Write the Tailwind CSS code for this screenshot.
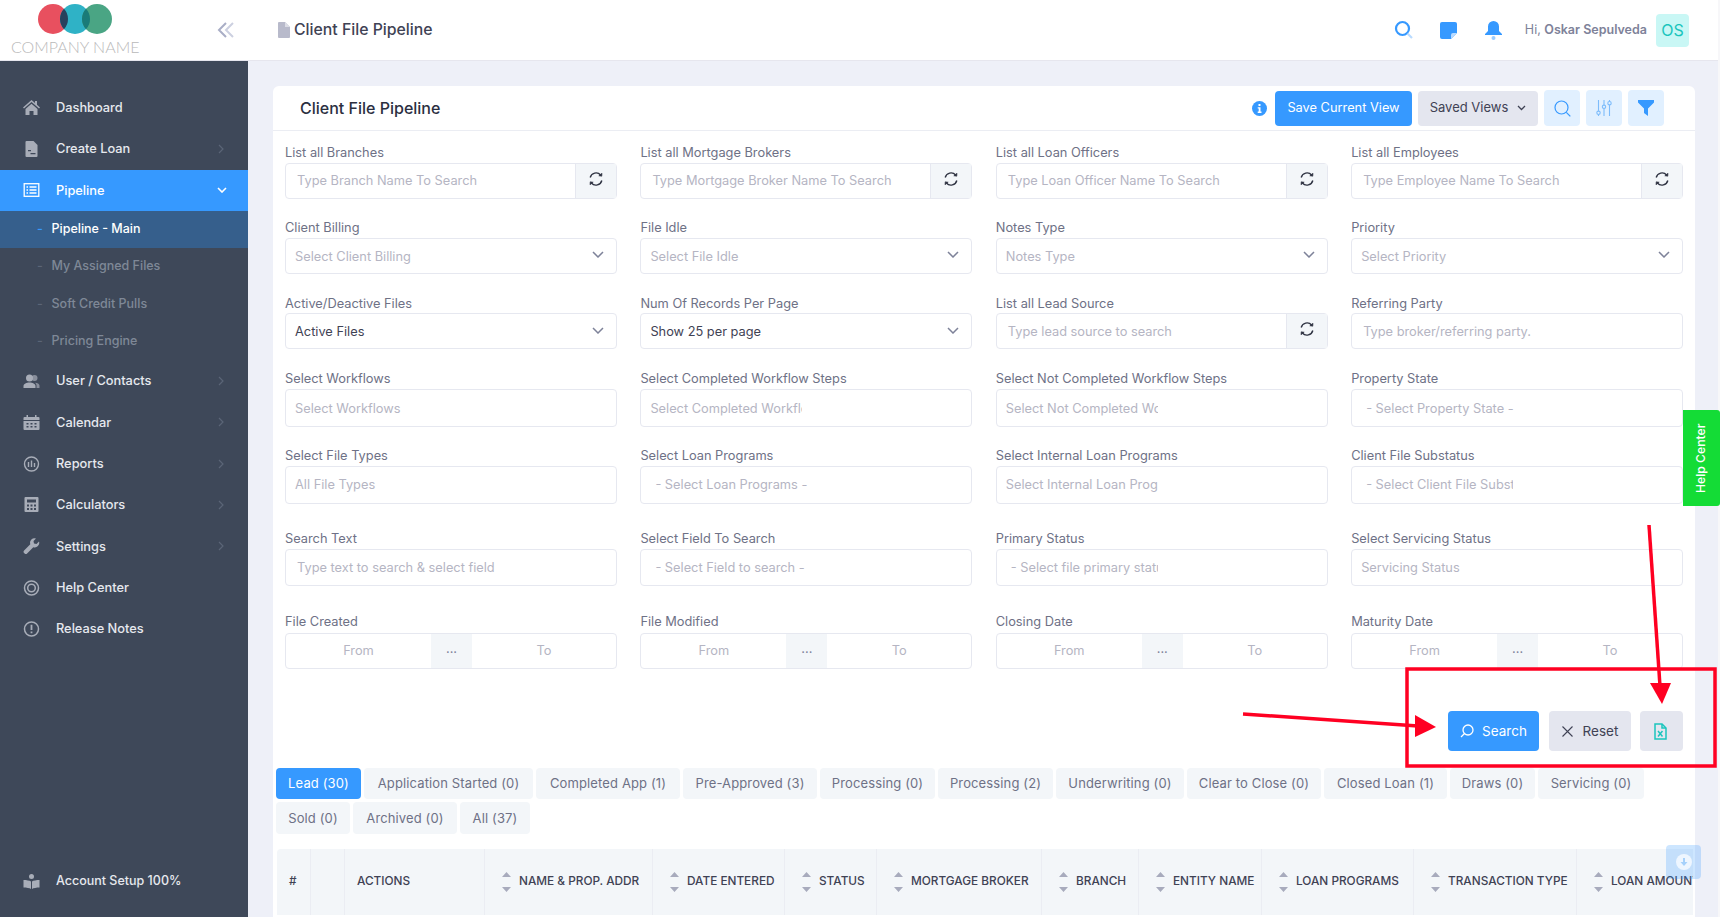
<!DOCTYPE html>
<html lang="en">
<head>
  <meta charset="UTF-8" />
  <title>Client File Pipeline</title>
  <script src="https://cdn.jsdelivr.net/npm/@tailwindcss/browser@4"></script>
</head>
<body class="relative w-[1720px] h-[917px] overflow-hidden bg-[#eef0f8] text-[#3f4254] [font-family:Inter,sans-serif] text-[13px]">

<!-- Header -->
<header class="flex items-center h-[61px] bg-white border-b border-[#e6e6ee]">
  <div class="relative w-[248px] h-full shrink-0 overflow-hidden">
    <svg class="absolute left-[36px] top-[3px]" width="78" height="32" viewBox="0 0 78 32">
      <circle cx="17" cy="16" r="15" fill="#e8505f"/>
      <circle cx="39" cy="16" r="15" fill="#2fb2c6"/>
      <circle cx="61" cy="16" r="15" fill="#4aa584"/>
      <path d="M28 5.800a15 15 0 0 1 0 20.400a15 15 0 0 1 0-20.400z" fill="#27405c"/>
      <path d="M50 5.800a15 15 0 0 1 0 20.400a15 15 0 0 1 0-20.400z" fill="#1a7b78"/>
    </svg>
    <div class="absolute left-[11px] top-[37px] text-[16px] leading-[20px] text-[#b9b9b9] [font-family:Lato,sans-serif] font-light whitespace-nowrap">COMPANY NAME</div>
    <svg class="absolute left-[217px] top-[22px]" width="18" height="16" viewBox="0 0 18 16" fill="none" stroke="#a9aec6" stroke-width="2"><path d="M9 1 2 8l7 7"/><path d="M16 1 9 8l7 7" stroke="#ccd0e0"/></svg>
  </div>
  <svg class="ml-[30px]" width="12" height="16" viewBox="0 0 12 16"><path d="M0 1a1 1 0 0 1 1-1h6l5 5v10a1 1 0 0 1-1 1H1a1 1 0 0 1-1-1z" fill="#b8bacb"/><path d="M7 0l5 5H7z" fill="#dcdde6"/></svg>
  <div class="ml-[4px] text-[15.800px] font-medium text-[#3f4254]">Client File Pipeline</div>
  <div class="ml-auto flex items-center pr-[31px]">
    <svg width="20" height="20" viewBox="0 0 20 20" fill="none"><circle cx="8.500" cy="8.500" r="6.500" stroke="#3699ff" stroke-width="2.200"/><path d="M13.500 13.500 18 18" stroke="#b9dbff" stroke-width="2.200"/></svg>
    <svg class="ml-[26px]" width="17" height="17" viewBox="0 0 17 17"><path d="M2 0h13a2 2 0 0 1 2 2v9l-6 6H2a2 2 0 0 1-2-2V2a2 2 0 0 1 2-2z" fill="#3699ff"/><path d="M11 17v-4a2 2 0 0 1 2-2h4z" fill="#b9dbff"/></svg>
    <svg class="ml-[28px]" width="17" height="19" viewBox="0 0 17 19"><path d="M8.500 0A5.500 5.500 0 0 0 3 5.500V10l-3 3v1h17v-1l-3-3V5.500A5.500 5.500 0 0 0 8.500 0z" fill="#3699ff"/><circle cx="8.500" cy="17" r="2" fill="#9ccdff"/></svg>
    <div class="ml-[23px] text-[#7e8299] text-[12.500px]">Hi, <span class="font-semibold">Oskar Sepulveda</span></div>
    <div class="ml-[9px] w-[33px] h-[33px] rounded-[4px] bg-[#c9f7f5] text-[#1bc5bd] text-[16px] flex items-center justify-center">OS</div>
  </div>
</header>

<div class="flex h-[856px]">
  <!-- Sidebar -->
  <aside class="relative w-[248px] shrink-0 bg-[#3e4859] pt-[26px] text-[12.800px] font-medium text-[#e6e8ee]">
    <a class="flex items-center h-[41.300px] pl-[23px]">
      <svg class="w-[17px] mr-[16px]" width="17" height="15" viewBox="0 0 17 15" fill="#a8adb8"><path d="M8.500 0 0 7.500l1 1L8.500 2l7.500 6.500 1-1-3-2.700V1h-2v2.100z"/><path d="M2.500 9 8.500 3.800 14.500 9v6h-4v-4h-4v4h-4z"/></svg>
      Dashboard
    </a>
    <a class="flex items-center h-[41.300px] pl-[23px]">
      <svg class="w-[17px] mr-[16px]" width="17" height="16" viewBox="0 0 12 16"><path d="M1 0h7l4 4v11a1 1 0 0 1-1 1H1a1 1 0 0 1-1-1V1a1 1 0 0 1 1-1z" fill="#a8adb8"/><path d="M2.500 9h3v1.200h-3zM5 12h5v1.200H5z" fill="#3e4859"/></svg>
      Create Loan
      <svg class="ml-auto mr-[24px]" width="6" height="10" viewBox="0 0 6 10" fill="none" stroke="#5b6577" stroke-width="1.200"><path d="m1 1 4 4-4 4"/></svg>
    </a>
    <a class="flex items-center h-[41.300px] pl-[23px] bg-[#3699ff] text-white">
      <svg class="w-[17px] mr-[16px]" width="16" height="14" viewBox="0 0 16 14" fill="none" stroke="#fff" stroke-width="1.300"><rect x=".7" y=".7" width="14.600" height="12.600"/><path d="M3 4h1.500M6 4h7M3 7h1.500M6 7h7M3 10h1.500M6 10h7"/></svg>
      Pipeline
      <svg class="ml-auto mr-[21px]" width="10" height="6" viewBox="0 0 10 6" fill="none" stroke="#fff" stroke-width="1.600"><path d="m1 1 4 4 4-4"/></svg>
    </a>
    <a class="flex items-center h-[37px] pl-[37px] bg-[#365f8c] text-white text-[12.500px]"><span class="w-[14.500px] text-[#3699ff]">-</span>Pipeline - Main</a>
    <a class="flex items-center h-[37.500px] pl-[37px] text-[#7f8897] text-[12.500px]"><span class="w-[14.500px] text-[#5b6577]">-</span>My Assigned Files</a>
    <a class="flex items-center h-[37.500px] pl-[37px] text-[#7f8897] text-[12.500px]"><span class="w-[14.500px] text-[#5b6577]">-</span>Soft Credit Pulls</a>
    <a class="flex items-center h-[37.500px] pl-[37px] text-[#7f8897] text-[12.500px]"><span class="w-[14.500px] text-[#5b6577]">-</span>Pricing Engine</a>
    <a class="flex items-center h-[41.300px] pl-[23px]">
      <svg class="w-[17px] mr-[16px]" width="16" height="14" viewBox="0 0 16 14" fill="#a8adb8"><circle cx="6" cy="4" r="3.500"/><circle cx="11" cy="4" r="3" opacity=".7"/><path d="M0 14v-2c0-2 3-3.500 6-3.500s6 1.500 6 3.500v2z"/><path d="M13 14v-2.500c0-1-.6-2-1.700-2.700 2.600.1 4.700 1.200 4.700 2.700V14z" opacity=".7"/></svg>
      User / Contacts
      <svg class="ml-auto mr-[24px]" width="6" height="10" viewBox="0 0 6 10" fill="none" stroke="#5b6577" stroke-width="1.200"><path d="m1 1 4 4-4 4"/></svg>
    </a>
    <a class="flex items-center h-[41.300px] pl-[23px]">
      <svg class="w-[17px] mr-[16px]" width="16" height="15" viewBox="0 0 16 15" fill="#a8adb8"><path d="M3 0h1.500v2h7V0H13v2h2a1 1 0 0 1 1 1v2H0V3a1 1 0 0 1 1-1h2z"/><path d="M0 6h16v8a1 1 0 0 1-1 1H1a1 1 0 0 1-1-1z"/><path d="M3 8h2v1.500H3zM7 8h2v1.500H7zM11 8h2v1.500h-2zM3 11h2v1.500H3zM7 11h2v1.500H7zM11 11h2v1.500h-2z" fill="#3e4859"/></svg>
      Calendar
      <svg class="ml-auto mr-[24px]" width="6" height="10" viewBox="0 0 6 10" fill="none" stroke="#5b6577" stroke-width="1.200"><path d="m1 1 4 4-4 4"/></svg>
    </a>
    <a class="flex items-center h-[41.300px] pl-[23px]">
      <svg class="w-[17px] mr-[16px]" width="16" height="16" viewBox="0 0 16 16" fill="none" stroke="#a8adb8"><circle cx="8" cy="8" r="7" stroke-width="1.400"/><path d="M5 11V6M8 11V4.500M11 11V7" stroke-width="1.400"/></svg>
      Reports
      <svg class="ml-auto mr-[24px]" width="6" height="10" viewBox="0 0 6 10" fill="none" stroke="#5b6577" stroke-width="1.200"><path d="m1 1 4 4-4 4"/></svg>
    </a>
    <a class="flex items-center h-[41.300px] pl-[23px]">
      <svg class="w-[17px] mr-[16px]" width="14" height="15" viewBox="0 0 14 15" fill="#a8adb8"><path d="M1 0h12a1 1 0 0 1 1 1v13a1 1 0 0 1-1 1H1a1 1 0 0 1-1-1V1a1 1 0 0 1 1-1z"/><path d="M2.500 2.500h9v3h-9zM2.500 7.500h2v2h-2zM6 7.500h2v2H6zM9.500 7.500h2v2h-2zM2.500 11h2v2h-2zM6 11h2v2H6zM9.500 11h2v2h-2z" fill="#3e4859"/></svg>
      Calculators
      <svg class="ml-auto mr-[24px]" width="6" height="10" viewBox="0 0 6 10" fill="none" stroke="#5b6577" stroke-width="1.200"><path d="m1 1 4 4-4 4"/></svg>
    </a>
    <a class="flex items-center h-[41.300px] pl-[23px]">
      <svg class="w-[17px] mr-[16px]" width="16" height="16" viewBox="0 0 16 16" fill="#a8adb8"><path d="M15.500 3.500 13 6l-2.500-.5L10 3l2.500-2.500A4.500 4.500 0 0 0 6.800 6.200L.6 12.400a1.800 1.800 0 0 0 0 2.500l.5.500a1.800 1.800 0 0 0 2.500 0l6.200-6.200a4.500 4.500 0 0 0 5.700-5.700z"/></svg>
      Settings
      <svg class="ml-auto mr-[24px]" width="6" height="10" viewBox="0 0 6 10" fill="none" stroke="#5b6577" stroke-width="1.200"><path d="m1 1 4 4-4 4"/></svg>
    </a>
    <a class="flex items-center h-[41.300px] pl-[23px]">
      <svg class="w-[17px] mr-[16px]" width="16" height="16" viewBox="0 0 16 16" fill="none" stroke="#a8adb8" stroke-width="1.500"><circle cx="8" cy="8" r="7"/><circle cx="8" cy="8" r="3.800"/></svg>
      Help Center
    </a>
    <a class="flex items-center h-[41.300px] pl-[23px]">
      <svg class="w-[17px] mr-[16px]" width="16" height="16" viewBox="0 0 16 16" fill="none" stroke="#a8adb8" stroke-width="1.500"><circle cx="8" cy="8" r="7"/><path d="M8 3.800v5.200M8 10.500v1.700" stroke-width="1.800"/></svg>
      Release Notes
    </a>
    <a class="absolute left-0 right-0 top-[800px] flex items-center h-[41.300px] pl-[23px] text-[12.500px]">
      <svg class="w-[17px] mr-[16px]" width="16" height="15" viewBox="0 0 16 15" fill="#a8adb8"><circle cx="8" cy="2.500" r="2.500"/><path d="M0 6c3 0 6 .5 7.500 1.500V15C6 14 3 13.500 0 13.500zM16 6c-3 0-6 .5-7.500 1.500V15c1.500-1 4.500-1.500 7.500-1.500z"/></svg>
      Account Setup 100%
    </a>
  </aside>

  <!-- Main -->
  <main class="flex-1 pl-[25px] pr-[25px] pt-[25px] overflow-hidden">
    <div class="bg-white rounded-t-[6px] h-[900px]">
      <div class="flex items-center h-[45px] border-b border-[#ebedf3] pl-[27px] pr-[31px]">
        <h1 class="text-[16px] font-medium text-[#2b2f3f]">Client File Pipeline</h1>
        <div class="ml-auto flex items-center">
          <svg width="15" height="15" viewBox="0 0 15 15"><circle cx="7.500" cy="7.500" r="7.500" fill="#3699ff"/><path d="M6.500 3h2v2h-2zM5.700 6.200h2.800v4.300h1v1.400H5.700v-1.400h1V7.600h-1z" fill="#fff"/></svg>
          <button class="ml-[8px] w-[137px] h-[35px] rounded-[4px] bg-[#3699ff] text-white text-[12.800px]">Save Current View</button>
          <button class="ml-[6px] w-[120px] h-[35px] rounded-[4px] bg-[#e4e6ef] text-[#3f4254] text-[13px] flex items-center justify-center gap-[9px]">Saved Views
            <svg width="9" height="6" viewBox="0 0 9 6" fill="none" stroke="#3f4254" stroke-width="1.300"><path d="m1 1 3.500 3.500L8 1"/></svg>
          </button>
          <div class="ml-[6px] w-[36px] h-[36px] rounded-[4px] bg-[#e1f0ff] flex items-center justify-center">
            <svg width="17" height="17" viewBox="0 0 17 17" fill="none" stroke="#3699ff" stroke-width="1.200"><circle cx="7.500" cy="7.500" r="6.500"/><path d="m12.300 12.300 4 4"/></svg>
          </div>
          <div class="ml-[6px] w-[36px] h-[36px] rounded-[4px] bg-[#e1f0ff] flex items-center justify-center">
            <svg width="16" height="16" viewBox="0 0 16 16" fill="none" stroke="#7dbcfb" stroke-width="1.100"><path d="M2.500 0v11M2.500 14.500V16M8 0v5M8 8.500V16M13.500 0v1.500M13.500 5V16"/><circle cx="2.500" cy="12.800" r="1.700"/><circle cx="8" cy="6.800" r="1.700"/><circle cx="13.500" cy="3.200" r="1.700"/></svg>
          </div>
          <div class="ml-[6px] w-[36px] h-[36px] rounded-[4px] bg-[#e1f0ff] flex items-center justify-center">
            <svg width="16" height="16" viewBox="0 0 16 16" fill="#3699ff"><path d="M0 0h16v2.500L10 8.500V16l-4-3V8.500L0 2.500z"/></svg>
          </div>
        </div>
      </div>

      <div class="px-[12px] text-[#b5b5c3] text-[12.800px]">
        <!-- Row 1 -->
        <div class="grid grid-cols-4 gap-x-[23.500px] pt-[10px]">
          <div><label class="block h-[22px] leading-[23px] text-[#6e7186]">List all Branches</label>
            <div class="flex h-[36px] border border-[#e6e8f0] rounded-[4px]"><div class="flex-1 pl-[11px] flex items-center">Type Branch Name To Search</div><div class="w-[41px] bg-[#f3f6f9] border-l border-[#e6e8f0] flex items-center justify-center"><svg class="mb-[4px]" width="16" height="16" viewBox="0 0 16 16" fill="none" stroke="#2f3342" stroke-width="1.400"><path d="M2.200 6.500A6 6 0 0 1 12.600 4M13.800 9.500A6 6 0 0 1 3.400 12"/><path d="m10.800 4.800 3 .4.200-3zM5.200 11.200l-3-.4-.2 3z" fill="#2f3342" stroke-width=".6"/></svg></div></div></div>
          <div><label class="block h-[22px] leading-[23px] text-[#6e7186]">List all Mortgage Brokers</label>
            <div class="flex h-[36px] border border-[#e6e8f0] rounded-[4px]"><div class="flex-1 pl-[11px] flex items-center">Type Mortgage Broker Name To Search</div><div class="w-[41px] bg-[#f3f6f9] border-l border-[#e6e8f0] flex items-center justify-center"><svg class="mb-[4px]" width="16" height="16" viewBox="0 0 16 16" fill="none" stroke="#2f3342" stroke-width="1.400"><path d="M2.200 6.500A6 6 0 0 1 12.600 4M13.800 9.500A6 6 0 0 1 3.400 12"/><path d="m10.800 4.800 3 .4.200-3zM5.200 11.200l-3-.4-.2 3z" fill="#2f3342" stroke-width=".6"/></svg></div></div></div>
          <div><label class="block h-[22px] leading-[23px] text-[#6e7186]">List all Loan Officers</label>
            <div class="flex h-[36px] border border-[#e6e8f0] rounded-[4px]"><div class="flex-1 pl-[11px] flex items-center">Type Loan Officer Name To Search</div><div class="w-[41px] bg-[#f3f6f9] border-l border-[#e6e8f0] flex items-center justify-center"><svg class="mb-[4px]" width="16" height="16" viewBox="0 0 16 16" fill="none" stroke="#2f3342" stroke-width="1.400"><path d="M2.200 6.500A6 6 0 0 1 12.600 4M13.800 9.500A6 6 0 0 1 3.400 12"/><path d="m10.800 4.800 3 .4.200-3zM5.200 11.200l-3-.4-.2 3z" fill="#2f3342" stroke-width=".6"/></svg></div></div></div>
          <div><label class="block h-[22px] leading-[23px] text-[#6e7186]">List all Employees</label>
            <div class="flex h-[36px] border border-[#e6e8f0] rounded-[4px]"><div class="flex-1 pl-[11px] flex items-center">Type Employee Name To Search</div><div class="w-[41px] bg-[#f3f6f9] border-l border-[#e6e8f0] flex items-center justify-center"><svg class="mb-[4px]" width="16" height="16" viewBox="0 0 16 16" fill="none" stroke="#2f3342" stroke-width="1.400"><path d="M2.200 6.500A6 6 0 0 1 12.600 4M13.800 9.500A6 6 0 0 1 3.400 12"/><path d="m10.800 4.800 3 .4.200-3zM5.200 11.200l-3-.4-.2 3z" fill="#2f3342" stroke-width=".6"/></svg></div></div></div>
        </div>
        <!-- Row 2 -->
        <div class="grid grid-cols-4 gap-x-[23.500px] mt-[17px]">
          <div><label class="block h-[22px] leading-[24px] text-[#6e7186]">Client Billing</label>
            <div class="flex items-center justify-between h-[36px] border border-[#e6e8f0] rounded-[4px] pl-[9px] pr-[12px] pt-[1px]">Select Client Billing<svg class="mb-[4px]" width="12" height="7" viewBox="0 0 12 7" fill="none" stroke="#7e8299" stroke-width="1.500"><path d="m1 1 5 5 5-5"/></svg></div></div>
          <div><label class="block h-[22px] leading-[24px] text-[#6e7186]">File Idle</label>
            <div class="flex items-center justify-between h-[36px] border border-[#e6e8f0] rounded-[4px] pl-[9px] pr-[12px] pt-[1px]">Select File Idle<svg class="mb-[4px]" width="12" height="7" viewBox="0 0 12 7" fill="none" stroke="#7e8299" stroke-width="1.500"><path d="m1 1 5 5 5-5"/></svg></div></div>
          <div><label class="block h-[22px] leading-[24px] text-[#6e7186]">Notes Type</label>
            <div class="flex items-center justify-between h-[36px] border border-[#e6e8f0] rounded-[4px] pl-[9px] pr-[12px] pt-[1px]">Notes Type<svg class="mb-[4px]" width="12" height="7" viewBox="0 0 12 7" fill="none" stroke="#7e8299" stroke-width="1.500"><path d="m1 1 5 5 5-5"/></svg></div></div>
          <div><label class="block h-[22px] leading-[24px] text-[#6e7186]">Priority</label>
            <div class="flex items-center justify-between h-[36px] border border-[#e6e8f0] rounded-[4px] pl-[9px] pr-[12px] pt-[1px]">Select Priority<svg class="mb-[4px]" width="12" height="7" viewBox="0 0 12 7" fill="none" stroke="#7e8299" stroke-width="1.500"><path d="m1 1 5 5 5-5"/></svg></div></div>
        </div>
        <!-- Row 3 -->
        <div class="grid grid-cols-4 gap-x-[23.500px] mt-[17px]">
          <div><label class="block h-[22px] leading-[25px] text-[#6e7186]">Active/Deactive Files</label>
            <div class="flex items-center justify-between h-[36px] border border-[#e6e8f0] rounded-[4px] pl-[9px] pr-[12px] pt-[2px] text-[#3f4254]">Active Files<svg class="mb-[4px]" width="12" height="7" viewBox="0 0 12 7" fill="none" stroke="#7e8299" stroke-width="1.500"><path d="m1 1 5 5 5-5"/></svg></div></div>
          <div><label class="block h-[22px] leading-[25px] text-[#6e7186]">Num Of Records Per Page</label>
            <div class="flex items-center justify-between h-[36px] border border-[#e6e8f0] rounded-[4px] pl-[9px] pr-[12px] pt-[2px] text-[#3f4254]">Show 25 per page<svg class="mb-[4px]" width="12" height="7" viewBox="0 0 12 7" fill="none" stroke="#7e8299" stroke-width="1.500"><path d="m1 1 5 5 5-5"/></svg></div></div>
          <div><label class="block h-[22px] leading-[25px] text-[#6e7186]">List all Lead Source</label>
            <div class="flex h-[36px] border border-[#e6e8f0] rounded-[4px]"><div class="flex-1 pl-[11px] pt-[1px] flex items-center">Type lead source to search</div><div class="w-[41px] bg-[#f3f6f9] border-l border-[#e6e8f0] flex items-center justify-center"><svg class="mb-[4px]" width="16" height="16" viewBox="0 0 16 16" fill="none" stroke="#2f3342" stroke-width="1.400"><path d="M2.200 6.500A6 6 0 0 1 12.600 4M13.800 9.500A6 6 0 0 1 3.400 12"/><path d="m10.800 4.800 3 .4.200-3zM5.200 11.200l-3-.4-.2 3z" fill="#2f3342" stroke-width=".6"/></svg></div></div></div>
          <div><label class="block h-[22px] leading-[25px] text-[#6e7186]">Referring Party</label>
            <div class="flex items-center h-[36px] border border-[#e6e8f0] rounded-[4px] pl-[11px] pt-[1px]">Type broker/referring party.</div></div>
        </div>
        <!-- Row 4 -->
        <div class="grid grid-cols-4 gap-x-[23.500px] mt-[18px]">
          <div><label class="block h-[22px] leading-[24px] text-[#6e7186]">Select Workflows</label>
            <div class="flex items-center h-[38px] border border-[#e6e8f0] rounded-[4px] pl-[9px] pt-[1px]">Select Workflows</div></div>
          <div><label class="block h-[22px] leading-[24px] text-[#6e7186]">Select Completed Workflow Steps</label>
            <div class="flex items-center h-[38px] border border-[#e6e8f0] rounded-[4px] pl-[9px] pt-[1px]"><span class="w-[152px] overflow-hidden whitespace-nowrap">Select Completed Workflow</span></div></div>
          <div><label class="block h-[22px] leading-[24px] text-[#6e7186]">Select Not Completed Workflow Steps</label>
            <div class="flex items-center h-[38px] border border-[#e6e8f0] rounded-[4px] pl-[9px] pt-[1px]"><span class="w-[152px] overflow-hidden whitespace-nowrap">Select Not Completed Workflow</span></div></div>
          <div><label class="block h-[22px] leading-[24px] text-[#6e7186]">Property State</label>
            <div class="flex items-center h-[38px] border border-[#e6e8f0] rounded-[4px] pl-[14px] pt-[1px]">- Select Property State -</div></div>
        </div>
        <!-- Row 5 -->
        <div class="grid grid-cols-4 gap-x-[23.500px] mt-[17px]">
          <div><label class="block h-[22px] leading-[24px] text-[#6e7186]">Select File Types</label>
            <div class="flex items-center h-[38px] border border-[#e6e8f0] rounded-[4px] pl-[9px]">All File Types</div></div>
          <div><label class="block h-[22px] leading-[24px] text-[#6e7186]">Select Loan Programs</label>
            <div class="flex items-center h-[38px] border border-[#e6e8f0] rounded-[4px] pl-[14px]">- Select Loan Programs -</div></div>
          <div><label class="block h-[22px] leading-[24px] text-[#6e7186]">Select Internal Loan Programs</label>
            <div class="flex items-center h-[38px] border border-[#e6e8f0] rounded-[4px] pl-[9px]"><span class="w-[152px] overflow-hidden whitespace-nowrap">Select Internal Loan Programs</span></div></div>
          <div><label class="block h-[22px] leading-[24px] text-[#6e7186]">Client File Substatus</label>
            <div class="flex items-center h-[38px] border border-[#e6e8f0] rounded-[4px] pl-[14px]"><span class="w-[147px] overflow-hidden whitespace-nowrap">- Select Client File Substatus -</span></div></div>
        </div>
        <!-- Row 6 -->
        <div class="grid grid-cols-4 gap-x-[23.500px] mt-[23px]">
          <div><label class="block h-[22px] leading-[24px] text-[#6e7186]">Search Text</label>
            <div class="flex items-center h-[37px] border border-[#e6e8f0] rounded-[4px] pl-[11px]">Type text to search &amp; select field</div></div>
          <div><label class="block h-[22px] leading-[24px] text-[#6e7186]">Select Field To Search</label>
            <div class="flex items-center h-[37px] border border-[#e6e8f0] rounded-[4px] pl-[14px]">- Select Field to search -</div></div>
          <div><label class="block h-[22px] leading-[24px] text-[#6e7186]">Primary Status</label>
            <div class="flex items-center h-[37px] border border-[#e6e8f0] rounded-[4px] pl-[14px]"><span class="w-[147px] overflow-hidden whitespace-nowrap">- Select file primary status -</span></div></div>
          <div><label class="block h-[22px] leading-[24px] text-[#6e7186]">Select Servicing Status</label>
            <div class="flex items-center h-[37px] border border-[#e6e8f0] rounded-[4px] pl-[9px]">Servicing Status</div></div>
        </div>
        <!-- Row 7 -->
        <div class="grid grid-cols-4 gap-x-[23.500px] mt-[25px]">
          <div><label class="block h-[22px] leading-[22px] text-[#6e7186]">File Created</label>
            <div class="flex h-[36px] border border-[#e6e8f0] rounded-[4px] text-center"><div class="w-[145px] leading-[33px]">From</div><div class="w-[41px] bg-[#f3f6f9] leading-[29px] text-[#7e8299]">...</div><div class="flex-1 leading-[33px]">To</div></div></div>
          <div><label class="block h-[22px] leading-[22px] text-[#6e7186]">File Modified</label>
            <div class="flex h-[36px] border border-[#e6e8f0] rounded-[4px] text-center"><div class="w-[145px] leading-[33px]">From</div><div class="w-[41px] bg-[#f3f6f9] leading-[29px] text-[#7e8299]">...</div><div class="flex-1 leading-[33px]">To</div></div></div>
          <div><label class="block h-[22px] leading-[22px] text-[#6e7186]">Closing Date</label>
            <div class="flex h-[36px] border border-[#e6e8f0] rounded-[4px] text-center"><div class="w-[145px] leading-[33px]">From</div><div class="w-[41px] bg-[#f3f6f9] leading-[29px] text-[#7e8299]">...</div><div class="flex-1 leading-[33px]">To</div></div></div>
          <div><label class="block h-[22px] leading-[22px] text-[#6e7186]">Maturity Date</label>
            <div class="flex h-[36px] border border-[#e6e8f0] rounded-[4px] text-center"><div class="w-[145px] leading-[33px]">From</div><div class="w-[41px] bg-[#f3f6f9] leading-[29px] text-[#7e8299]">...</div><div class="flex-1 leading-[33px]">To</div></div></div>
        </div>
        <!-- Action buttons -->
        <div class="flex justify-end mt-[42px] h-[40px] text-[13.500px]">
          <button class="w-[91px] rounded-[4px] bg-[#3699ff] text-white flex items-center justify-center gap-[8px]">
            <svg width="14" height="14" viewBox="0 0 14 14" fill="none" stroke="#fff" stroke-width="1.300"><circle cx="8" cy="6" r="5"/><path d="m4.500 9.500-3.500 3.500"/></svg>Search</button>
          <button class="ml-[10px] w-[82px] rounded-[4px] bg-[#e4e6ef] text-[#3f4254] flex items-center justify-center gap-[10px]">
            <svg width="11" height="11" viewBox="0 0 11 11" fill="none" stroke="#3f4254" stroke-width="1.100"><path d="m.5.5 10 10M10.500.5l-10 10"/></svg>Reset</button>
          <button class="ml-[9px] w-[43px] rounded-[4px] bg-[#e4e6ef] flex items-center justify-center pr-[3px]">
            <svg width="13" height="17" viewBox="0 0 13 17" fill="none" stroke="#1bc5bd" stroke-width="1.500"><path d="M1 1h7l4 4v11H1z"/><path d="M8 1v4h4M4 8l4.500 5.500M8.500 8 4 13.500"/></svg>
          </button>
        </div>
      </div>

      <!-- Status tabs -->
      <div class="mt-[17px] ml-[3px] text-[#6e7186] text-[13px] tracking-[0.01em]">
        <div class="flex gap-[3px] h-[31px] text-center leading-[31px]">
          <div class="w-[85px] rounded-[4px] bg-[#3699ff] text-white">Lead (30)</div>
          <div class="w-[169px] rounded-[4px] bg-[#f3f6f9]">Application Started (0)</div>
          <div class="w-[144px] rounded-[4px] bg-[#f3f6f9]">Completed App (1)</div>
          <div class="w-[134px] rounded-[4px] bg-[#f3f6f9]">Pre-Approved (3)</div>
          <div class="w-[115px] rounded-[4px] bg-[#f3f6f9]">Processing (0)</div>
          <div class="w-[115px] rounded-[4px] bg-[#f3f6f9]">Processing (2)</div>
          <div class="w-[128px] rounded-[4px] bg-[#f3f6f9]">Underwriting (0)</div>
          <div class="w-[134px] rounded-[4px] bg-[#f3f6f9]">Clear to Close (0)</div>
          <div class="w-[123px] rounded-[4px] bg-[#f3f6f9]">Closed Loan (1)</div>
          <div class="w-[85px] rounded-[4px] bg-[#f3f6f9]">Draws (0)</div>
          <div class="w-[106px] rounded-[4px] bg-[#f3f6f9]">Servicing (0)</div>
        </div>
        <div class="flex gap-[3px] h-[32px] mt-[3px] text-center leading-[32px]">
          <div class="w-[74px] rounded-[4px] bg-[#f3f6f9]">Sold (0)</div>
          <div class="w-[104px] rounded-[4px] bg-[#f3f6f9]">Archived (0)</div>
          <div class="w-[70px] rounded-[4px] bg-[#f3f6f9]">All (37)</div>
        </div>
      </div>

      <!-- Table header -->
      <div class="flex mt-[15px] ml-[4px] w-[1416px] h-[66px] bg-[#f3f6f9] rounded-tl-[4px] text-[#3f4254] text-[11.800px] font-medium whitespace-nowrap overflow-hidden">
        <div class="w-[34px] flex items-center pl-[12px] border-r border-[#ebedf3]">#</div>
        <div class="w-[34px] border-r border-[#ebedf3]"></div>
        <div class="w-[140px] flex items-center pl-[12px] border-r border-[#ebedf3]">ACTIONS</div>
        <div class="w-[168px] flex items-center pl-[17px] gap-[8px] border-r border-[#ebedf3]"><svg width="9" height="20" viewBox="0 0 9 20" fill="#a8abbd"><path d="M4.500 0 9 5H0zM0 15h9l-4.500 5z"/></svg>NAME &amp; PROP. ADDR</div>
        <div class="w-[132px] flex items-center pl-[17px] gap-[8px] border-r border-[#ebedf3]"><svg width="9" height="20" viewBox="0 0 9 20" fill="#a8abbd"><path d="M4.500 0 9 5H0zM0 15h9l-4.500 5z"/></svg>DATE ENTERED</div>
        <div class="w-[92px] flex items-center pl-[17px] gap-[8px] border-r border-[#ebedf3]"><svg width="9" height="20" viewBox="0 0 9 20" fill="#a8abbd"><path d="M4.500 0 9 5H0zM0 15h9l-4.500 5z"/></svg>STATUS</div>
        <div class="w-[165px] flex items-center pl-[17px] gap-[8px] border-r border-[#ebedf3]"><svg width="9" height="20" viewBox="0 0 9 20" fill="#a8abbd"><path d="M4.500 0 9 5H0zM0 15h9l-4.500 5z"/></svg>MORTGAGE BROKER</div>
        <div class="w-[97px] flex items-center pl-[17px] gap-[8px] border-r border-[#ebedf3]"><svg width="9" height="20" viewBox="0 0 9 20" fill="#a8abbd"><path d="M4.500 0 9 5H0zM0 15h9l-4.500 5z"/></svg>BRANCH</div>
        <div class="w-[123px] flex items-center pl-[17px] gap-[8px] border-r border-[#ebedf3]"><svg width="9" height="20" viewBox="0 0 9 20" fill="#a8abbd"><path d="M4.500 0 9 5H0zM0 15h9l-4.500 5z"/></svg>ENTITY NAME</div>
        <div class="w-[152px] flex items-center pl-[17px] gap-[8px] border-r border-[#ebedf3]"><svg width="9" height="20" viewBox="0 0 9 20" fill="#a8abbd"><path d="M4.500 0 9 5H0zM0 15h9l-4.500 5z"/></svg>LOAN PROGRAMS</div>
        <div class="w-[163px] flex items-center pl-[17px] gap-[8px] border-r border-[#ebedf3]"><svg width="9" height="20" viewBox="0 0 9 20" fill="#a8abbd"><path d="M4.500 0 9 5H0zM0 15h9l-4.500 5z"/></svg>TRANSACTION TYPE</div>
        <div class="w-[116px] shrink-0 flex items-center pl-[17px] gap-[8px] overflow-hidden"><svg class="shrink-0" width="9" height="20" viewBox="0 0 9 20" fill="#a8abbd"><path d="M4.500 0 9 5H0zM0 15h9l-4.500 5z"/></svg>LOAN AMOUNT</div>
      </div>
    </div>
  </main>
</div>

<!-- Page edge -->
<div class="absolute right-0 top-0 bottom-0 w-[2px] bg-[#f7f7f9]"></div>

<!-- Help Center tab -->
<div class="absolute left-[1683px] top-[410px] w-[37px] h-[96px] rounded-l-[3px] bg-[#14dc36] text-white text-[12.200px] font-medium flex items-center justify-center [writing-mode:vertical-rl] rotate-180">Help Center</div>

<!-- Scroll to bottom button -->
<div class="absolute left-[1666px] top-[845px] w-[35px] h-[34px] rounded-[4px] bg-[#3699ff]/25 flex items-center justify-center">
  <svg width="16" height="16" viewBox="0 0 16 16"><circle cx="8" cy="8" r="8" fill="#eef6ff"/><path d="M7 4h2v4h2.500L8 12 4.500 8H7z" fill="#a6d1fb"/></svg>
</div>

<!-- Red annotations -->
<svg class="absolute inset-0 pointer-events-none" width="1720" height="917" viewBox="0 0 1720 917">
  <rect x="1407" y="669" width="308" height="97" fill="none" stroke="#ff0022" stroke-width="3.500"/>
  <path d="M1243 714 1418 726" stroke="#ff0022" stroke-width="3.500"/>
  <path d="M1415 715 1436 727 1415 737z" fill="#ff0022"/>
  <path d="M1649 525 1660 686" stroke="#ff0022" stroke-width="3.500"/>
  <path d="M1650 683 1671 683 1662 704z" fill="#ff0022"/>
</svg>

</body>
</html>
